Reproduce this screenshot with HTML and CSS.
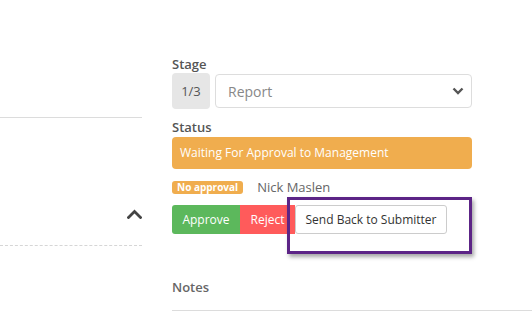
FILE: index.html
```html
<!DOCTYPE html>
<html>
<head>
<meta charset="utf-8">
<link rel="stylesheet" href="styles.css">
</head>
<body>
<div class="page">
  <div class="left">
    <div class="left-head"></div>
    <div class="left-row">
      <svg class="chev-up" width="15" height="10" viewBox="0 0 15 10"><path d="M1.5 8.5 L7.5 2.5 L13.5 8.5" fill="none" stroke="#444" stroke-width="2.8" stroke-linecap="square"/></svg>
    </div>
  </div>
  <div class="right">
    <div class="form">
      <div class="label">Stage</div>
      <div class="stage-row">
        <div class="stage-num">1/3</div>
        <div class="select">
          <span>Report</span>
          <svg width="12" height="8" viewBox="0 0 12 8"><path d="M1.5 1.5 L6 6 L10.5 1.5" fill="none" stroke="#555" stroke-width="2.4"/></svg>
        </div>
      </div>
      <div class="label status-label">Status</div>
      <div class="status">Waiting For Approval to Management</div>
      <div class="approver">
        <span class="badge">No approval</span>
        <span class="name">Nick Maslen</span>
      </div>
      <div class="actions">
        <button class="btn approve">Approve</button>
        <button class="btn reject">Reject</button>
        <button class="btn send">Send Back to Submitter</button>
        <div class="highlight"></div>
      </div>
    </div>
    <div class="notes">Notes</div>
  </div>
</div>
</body>
</html>
```
FILE: styles.css
```css
html, body {
  margin: 0;
  padding: 0;
  background: #fff;
  font-family: "Open Sans", "Liberation Sans", sans-serif;
}
.page {
  display: flex;
  gap: 30px;
  width: 532px;
  height: 318px;
  overflow: hidden;
}
.left {
  width: 142px;
  flex: none;
}
.left-head {
  height: 117px;
  border-bottom: 1px solid #dcdcdc;
}
.left-row {
  height: 127px;
  border-bottom: 1px dashed #d6d6d6;
  display: flex;
  justify-content: flex-end;
  align-items: flex-start;
}
.chev-up {
  margin-top: 91px;
}
.right {
  flex: 1;
  padding-top: 55px;
}
.form {
  width: 300px;
}
.label {
  font-size: 13px;
  font-weight: 600;
  color: #555;
  line-height: 18px;
}
.stage-row {
  display: flex;
  gap: 5px;
}
.stage-num {
  width: 38px;
  height: 36px;
  background: #e6e6e6;
  border-radius: 4px;
  display: flex;
  align-items: center;
  justify-content: center;
  font-size: 13px;
  color: #555;
}
.select {
  flex: 1;
  height: 34px;
  margin-top: 1px;
  border: 1px solid #ddd;
  border-radius: 4px;
  box-sizing: border-box;
  display: flex;
  align-items: center;
  justify-content: space-between;
  padding: 0 7px 0 12px;
  font-size: 14px;
  color: #888;
}
.status-label {
  margin-top: 9px;
}
.status {
  height: 32px;
  margin-top: 1px;
  background: #f0ad4e;
  border-radius: 4px;
  color: #fff;
  font-size: 12px;
  line-height: 32px;
  padding-left: 8px;
}
.approver {
  display: flex;
  align-items: center;
  gap: 14px;
  margin-top: 11px;
  height: 14px;
}
.badge {
  background: #f0ad4e;
  color: #fff;
  font-size: 10px;
  font-weight: 700;
  border-radius: 3px;
  height: 13px;
  line-height: 13px;
  padding: 0 5px;
}
.name {
  font-size: 13px;
  color: #666;
}
.actions {
  position: relative;
  display: flex;
  margin-top: 11px;
}
.btn {
  height: 29px;
  border: none;
  font-family: inherit;
  font-size: 12px;
  padding: 0;
  margin: 0;
  cursor: pointer;
}
.approve {
  width: 68px;
  background: #5cb85c;
  color: #fff;
  border-radius: 3px 0 0 3px;
}
.reject {
  width: 55px;
  background: #ff5b5b;
  color: #fff;
}
.send {
  width: 152px;
  background: #fff;
  color: #333;
  border: 1px solid #ccc;
  border-radius: 3px;
}
.highlight {
  position: absolute;
  left: 115px;
  top: -8px;
  width: 185px;
  height: 57px;
  box-sizing: border-box;
  border: 3px solid #5c2486;
  box-shadow: 2px 3px 4px rgba(0,0,0,0.35);
}
.notes {
  margin-top: 44px;
  font-size: 13px;
  font-weight: 600;
  color: #666;
  line-height: 18px;
  padding-bottom: 14px;
  border-bottom: 1px solid #dcdcdc;
}
```
